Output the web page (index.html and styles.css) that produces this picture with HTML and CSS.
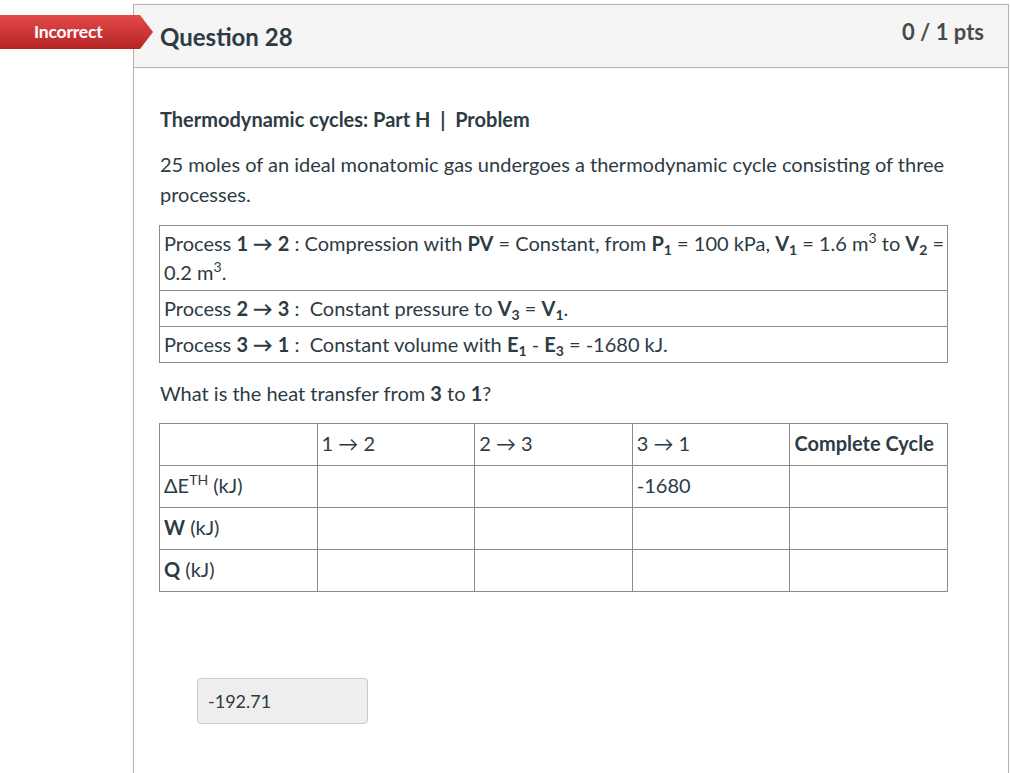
FILE: index.html
```html
<!DOCTYPE html>
<html lang="en">
<head>
<meta charset="utf-8">
<title>Question 28</title>
<link rel="stylesheet" href="styles.css">
</head>
<body>
<div class="page">
  <div class="badge">Incorrect</div>
  <div class="card">
    <div class="card-header">
      <h2 class="q-title">Question 28</h2>
      <div class="q-points">0 / 1 pts</div>
    </div>
    <div class="card-body">
      <p class="heading"><b>Thermodynamic cycles: Part H&nbsp; |&nbsp; Problem</b></p>
      <p class="para">25 moles of an ideal monatomic gas undergoes a thermodynamic cycle consisting of three processes.</p>
      <table class="proc">
        <tr><td>Process <b>1 → 2</b> : Compression with <b>PV</b> = Constant, from <b>P<sub>1</sub></b> = 100 kPa, <b>V<sub>1</sub></b> = 1.6 m<sup>3</sup> to <b>V<sub>2</sub></b> = 0.2 m<sup>3</sup>.</td></tr>
        <tr><td>Process <b>2 → 3</b> :&nbsp; Constant pressure to <b>V<sub>3</sub></b> = <b>V<sub>1</sub></b>.</td></tr>
        <tr><td>Process <b>3 → 1</b> :&nbsp; Constant volume with <b>E<sub>1</sub></b> - <b>E<sub>3</sub></b> = -1680 kJ.</td></tr>
      </table>
      <p class="para ask">What is the heat transfer from <b>3</b> to <b>1</b>?</p>
      <table class="grid">
        <tr><td></td><td>1 → 2</td><td>2 → 3</td><td>3 → 1</td><td><b>Complete Cycle</b></td></tr>
        <tr><td>ΔE<sup>TH</sup> (kJ)</td><td></td><td></td><td>-1680</td><td></td></tr>
        <tr><td><b>W</b> (kJ)</td><td></td><td></td><td></td><td></td></tr>
        <tr><td><b>Q</b> (kJ)</td><td></td><td></td><td></td><td></td></tr>
      </table>
      <div class="answer">-192.71</div>
    </div>
  </div>
</div>
</body>
</html>
```

FILE: styles.css
```css
html, body {
  margin: 0;
  padding: 0;
  background: #ffffff;
  font-family: "Lato", "Open Sans", "Liberation Sans", sans-serif;
  color: #2d3b45;
}

.page {
  position: relative;
  padding: 4px 0 0 133px;
  height: 769px;
  overflow: hidden;
}

.badge {
  position: absolute;
  left: 0;
  top: 15px;
  width: 153px;
  height: 34px;
  box-sizing: border-box;
  padding-left: 34px;
  line-height: 34px;
  font-size: 17.5px;
  font-weight: 700;
  color: #ffffff;
  letter-spacing: -0.2px;
  background: linear-gradient(#e44a4a, #b52424);
  clip-path: polygon(0 0, 140px 0, 153px 50%, 140px 100%, 0 100%);
  z-index: 2;
}

.card {
  width: 876px;
  box-sizing: border-box;
  border: 1px solid #b2b2b2;
  border-bottom: none;
  height: 800px;
}

.card-header {
  display: flex;
  justify-content: space-between;
  align-items: flex-start;
  height: 62px;
  background: #f5f5f5;
  border-bottom: 1px solid #b2b2b2;
  padding: 0 24px 0 26px;
}

.q-title {
  margin: 18px 0 0 0;
  font-size: 24px;
  font-weight: 700;
  line-height: 28px;
  color: #2d3b45;
}

.q-points {
  margin-top: 14px;
  font-size: 22px;
  font-weight: 700;
  line-height: 26px;
  color: #4a4a4a;
}

.card-body {
  padding: 37px 0 0 26px;
}

.heading {
  margin: 0;
  font-size: 20px;
  line-height: 28px;
}

.para {
  margin: 16px 0 0 0;
  font-size: 20px;
  line-height: 30px;
}

.ask {
  margin-top: 15px;
}

sub, sup {
  font-size: 14px;
  line-height: 0;
}

sub {
  vertical-align: -4px;
}

.proc {
  margin: 16px 0 0 -1px;
  width: 789px;
  border-collapse: collapse;
  font-size: 20px;
  line-height: 29px;
}

.proc td {
  border: 1px solid #8a8a8a;
  padding: 3px 1px 3px 4px;
}

.grid {
  margin: 15px 0 0 -1px;
  width: 789px;
  table-layout: fixed;
  border-collapse: collapse;
  font-size: 20px;
  line-height: 24px;
}

.grid td {
  border: 1px solid #8a8a8a;
  height: 42px;
  box-sizing: border-box;
  padding: 0 4px 4px 4px;
  vertical-align: middle;
}

.answer {
  margin: 86px 0 0 37px;
  width: 171px;
  height: 46px;
  box-sizing: border-box;
  background: #eeeeee;
  border: 1px solid #c9c9c9;
  border-radius: 4px;
  padding-left: 10px;
  font-size: 18px;
  line-height: 44px;
  color: #2d3b45;
}
```
